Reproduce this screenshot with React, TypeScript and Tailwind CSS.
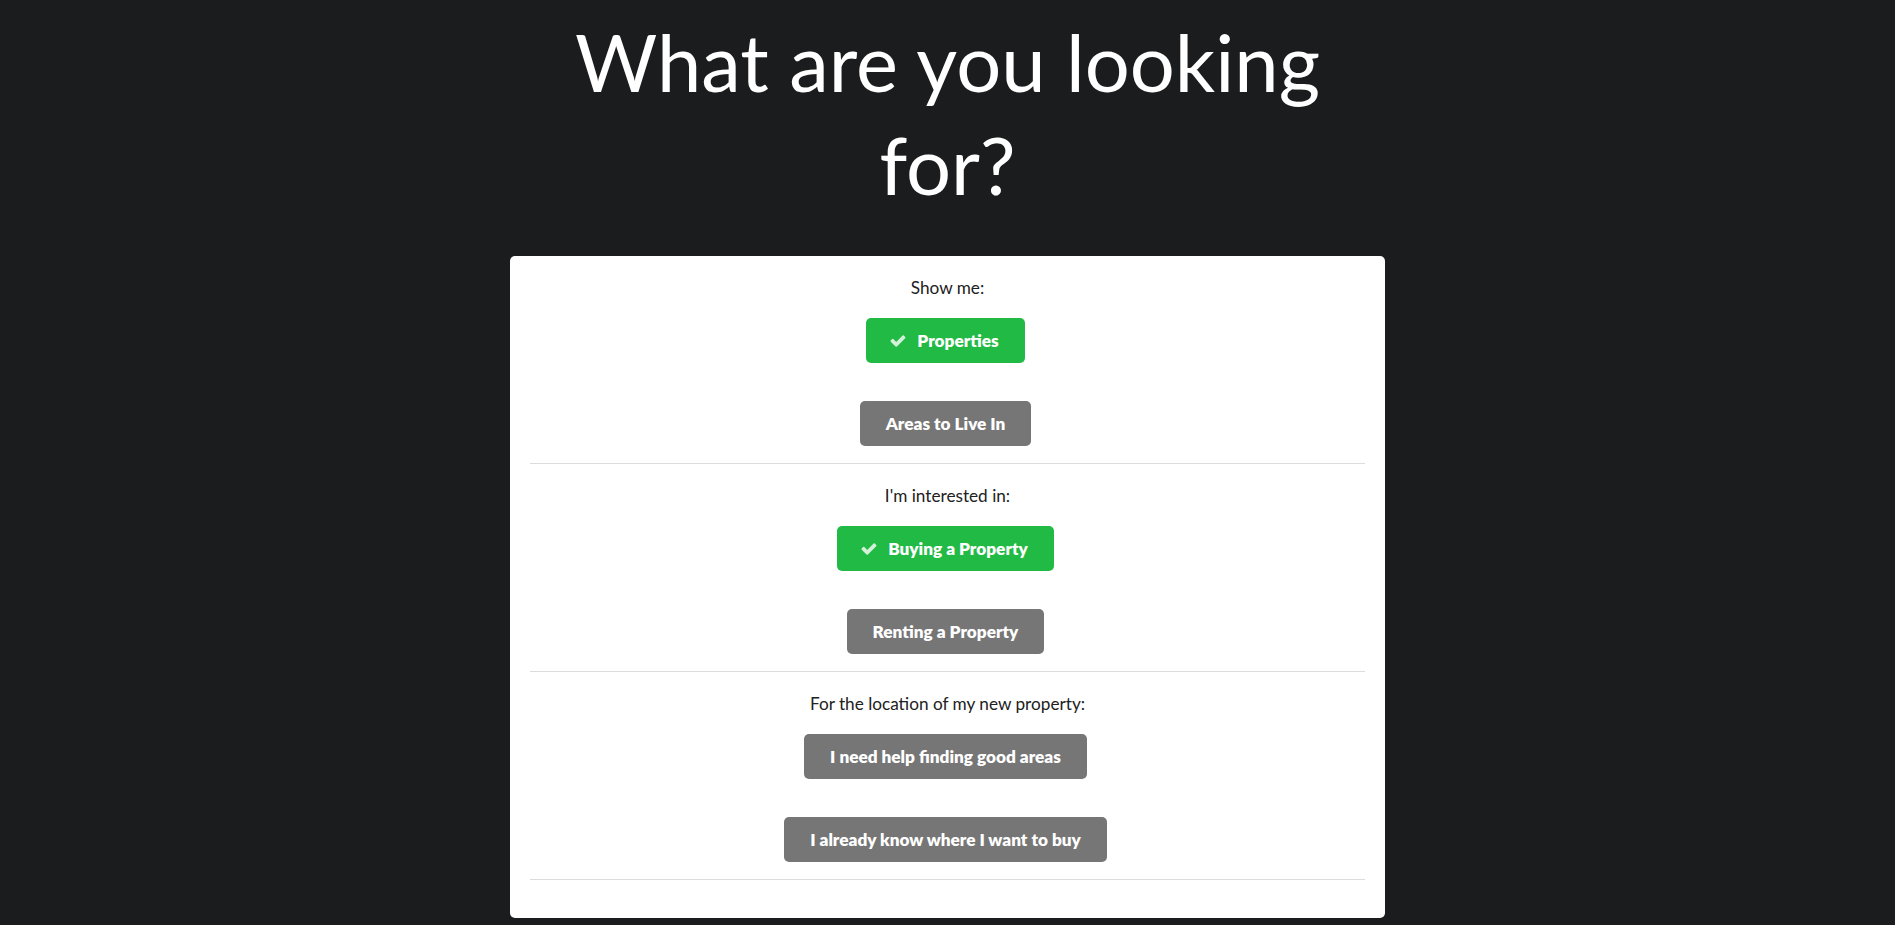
import React from "react";

function Check() {
  return (
    <svg viewBox="125 300 1546 1240" className="w-[16px] h-[12px] mr-[11px] opacity-80" fill="currentColor">
      <path d="M1671 566q0 40-28 68l-724 724-136 136q-28 28-68 28t-68-28l-136-136-362-362q-28-28-28-68t28-68l136-136q28-28 68-28t68 28l294 295 656-657q28-28 68-28t68 28l136 136q28 28 28 68z" />
    </svg>
  );
}

function Btn({ label, active }: { label: string; active?: boolean }) {
  return (
    <button
      className={
        "inline-flex items-center h-[45px] rounded-[5px] mr-[4px] text-white font-extrabold text-[17.2px] leading-none " +
        (active ? "bg-[#21ba45] pl-[24px] pr-[26px]" : "bg-[#767676] px-[26px]")
      }
    >
      {active && <Check />}
      {label}
    </button>
  );
}

function Section({ title, options }: { title: string; options: { label: string; active?: boolean }[] }) {
  return (
    <div className="flex flex-col items-center">
      <div className="h-[25px] leading-[25px] text-[17.2px] text-[#212121] mb-[18px]">{title}</div>
      <div className="flex flex-col items-center gap-[38px]">
        {options.map((o) => (
          <Btn key={o.label} label={o.label} active={o.active} />
        ))}
      </div>
      <div className="w-full h-px bg-[#dcdcdc] mt-[17px] mb-[19px]" />
    </div>
  );
}

export default function App() {
  return (
    <div
      className="min-h-screen bg-[#1b1c1d] pt-[10px] pb-[8px]"
      style={{ fontFamily: "Lato, 'Helvetica Neue', Arial, sans-serif" }}
    >
      <h1 className="w-[875px] mx-auto text-center text-white text-[79.5px] leading-[103px] font-normal mb-[40px]">
        What are you looking for?
      </h1>
      <div className="w-[875px] mx-auto bg-white rounded-[5px] px-[20px] pt-[19px] pb-[19px]">
        <Section
          title="Show me:"
          options={[{ label: "Properties", active: true }, { label: "Areas to Live In" }]}
        />
        <Section
          title="I'm interested in:"
          options={[{ label: "Buying a Property", active: true }, { label: "Renting a Property" }]}
        />
        <Section
          title="For the location of my new property:"
          options={[{ label: "I need help finding good areas" }, { label: "I already know where I want to buy" }]}
        />
      </div>
    </div>
  );
}
